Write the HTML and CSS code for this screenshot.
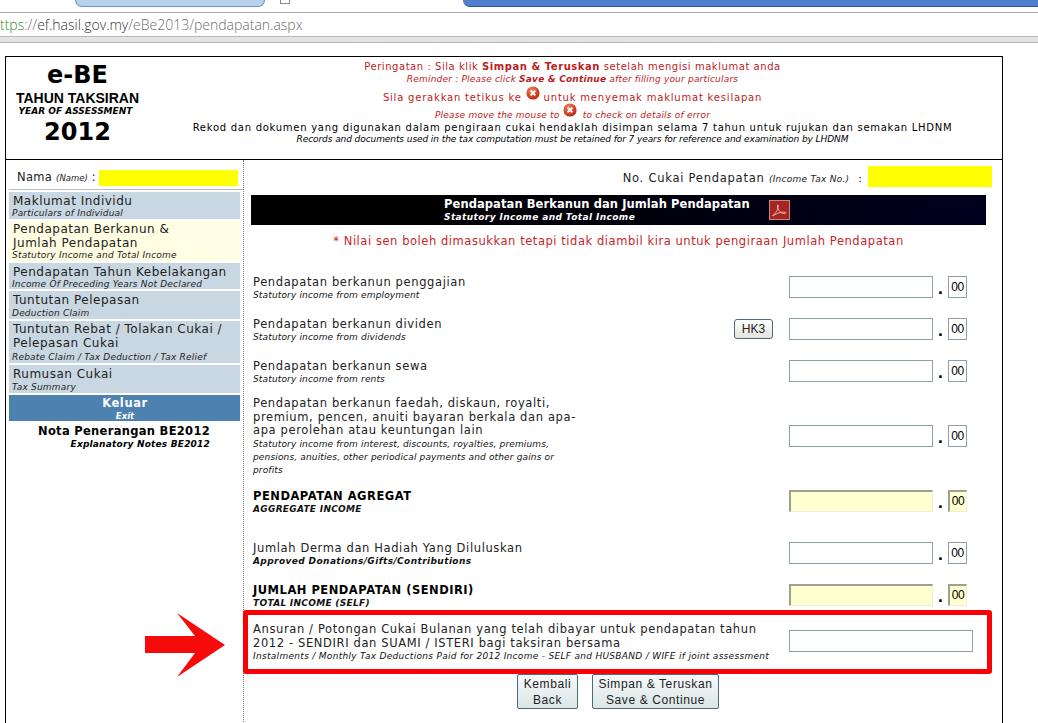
FILE: index.html
```html
<!DOCTYPE html>
<html lang="ms">
<head>
<meta charset="utf-8">
<title>e-BE 2012 - Pendapatan</title>
<link rel="stylesheet" href="styles.css">
</head>
<body>
<div class="tabstrip">
  <div class="tab-light"></div>
  <div class="tab-icon"></div>
  <div class="tab-blue"></div>
</div>
<div class="urlbar"><span class="scheme">ttps</span>://<span class="host">ef.hasil.gov.my</span>/eBe2013/pendapatan.aspx</div>
<div class="toolband"></div>

<div class="sheet">
  <header class="head">
    <div class="brand">
      <div class="brand-title">e-BE</div>
      <div class="brand-year-ms">TAHUN TAKSIRAN</div>
      <div class="brand-year-en">YEAR OF ASSESSMENT</div>
      <div class="brand-num">2012</div>
    </div>
    <div class="notes">
      <p class="n-red n1">Peringatan : Sila klik <b>Simpan &amp; Teruskan</b> setelah mengisi maklumat anda</p>
      <p class="n-red-i n2">Reminder : Please click <b>Save &amp; Continue</b> after filling your particulars</p>
      <p class="n-red n3">Sila gerakkan tetikus ke <svg class="err" viewBox="0 0 16 16"><use href="#x"/></svg> untuk menyemak maklumat kesilapan</p>
      <p class="n-red-i n4">Please move the mouse to <svg class="err" viewBox="0 0 16 16"><use href="#x"/></svg> &nbsp;to check on details of error</p>
      <p class="n-blk n5">Rekod dan dokumen yang digunakan dalam pengiraan cukai hendaklah disimpan selama 7 tahun untuk rujukan dan semakan LHDNM</p>
      <p class="n-blk-i n6">Records and documents used in the tax computation must be retained for 7 years for reference and examination by LHDNM</p>
    </div>
  </header>

  <div class="body">
    <aside class="side">
      <div class="namebar">
        <span class="nm">Nama <i>(Name)</i> :</span><span class="yellow-name"></span>
      </div>
      <nav class="menu">
        <a class="mi h27"><span class="ms">Maklumat Individu</span><span class="en">Particulars of Individual</span></a>
        <a class="mi mi-on h40"><span class="ms">Pendapatan Berkanun &amp;<br>Jumlah Pendapatan</span><span class="en">Statutory Income and Total Income</span></a>
        <a class="mi h26"><span class="ms">Pendapatan Tahun Kebelakangan</span><span class="en">Income Of Preceding Years Not Declared</span></a>
        <a class="mi h28"><span class="ms">Tuntutan Pelepasan</span><span class="en">Deduction Claim</span></a>
        <a class="mi h42"><span class="ms">Tuntutan Rebat / Tolakan Cukai /<br>Pelepasan Cukai</span><span class="en">Rebate Claim / Tax Deduction / Tax Relief</span></a>
        <a class="mi h28"><span class="ms">Rumusan Cukai</span><span class="en">Tax Summary</span></a>
        <a class="mi-exit"><b>Keluar</b><i>Exit</i></a>
      </nav>
      <div class="nota">
        <b>Nota Penerangan BE2012</b>
        <i>Explanatory Notes BE2012</i>
      </div>
    </aside>

    <main class="main">
      <div class="taxno">
        <span class="tn">No. Cukai Pendapatan <i>(Income Tax No.)</i></span><span class="tc">:</span><span class="yellow-tax"></span>
      </div>
      <div class="banner">
        <div class="banner-text"><b>Pendapatan Berkanun dan Jumlah Pendapatan</b><i>Statutory Income and Total Income</i></div>
        <svg class="pdf" viewBox="0 0 21 20">
          <rect x="0.5" y="0.5" width="20" height="19" fill="#a92420" stroke="#c9877e"/>
          <path d="M3.500 15.500c3-1.500 5-5 5.800-9.500.2-1.400-.8-1.600-1-.3-.2 2 2.500 6.500 4.200 7.300 1.700.8 4.500 1 4.500-.2 0-1-4.500-.8-7.500.2-2.500.8-5 2.800-5.500 3z" fill="none" stroke="#eecfc8" stroke-width="0.800"/>
        </svg>
      </div>
      <p class="sen">* Nilai sen boleh dimasukkan tetapi tidak diambil kira untuk pengiraan Jumlah Pendapatan</p>

      <div class="rows">
        <div class="row r42">
          <div class="lab"><span class="ms">Pendapatan berkanun penggajian</span><span class="en">Statutory income from employment</span></div>
          <div class="amt"><input class="rm" type="text"><span class="dot">.</span><span class="cents">00</span></div>
        </div>
        <div class="row r42">
          <div class="lab"><span class="ms">Pendapatan berkanun dividen</span><span class="en">Statutory income from dividends</span></div>
          <button class="hk3" type="button">HK3</button>
          <div class="amt"><input class="rm" type="text"><span class="dot">.</span><span class="cents">00</span></div>
        </div>
        <div class="row r42">
          <div class="lab"><span class="ms">Pendapatan berkanun sewa</span><span class="en">Statutory income from rents</span></div>
          <div class="amt"><input class="rm" type="text"><span class="dot">.</span><span class="cents">00</span></div>
        </div>
        <div class="row r88">
          <div class="lab lab-narrow"><span class="ms">Pendapatan berkanun faedah, diskaun, royalti, premium, pencen, anuiti bayaran berkala dan apa-apa perolehan atau keuntungan lain</span><span class="en">Statutory income from interest, discounts, royalties, premiums, pensions, anuities, other periodical payments and other gains or profits</span></div>
          <div class="amt"><input class="rm" type="text"><span class="dot">.</span><span class="cents">00</span></div>
        </div>
        <div class="row r42 gap-after">
          <div class="lab"><span class="ms strong">PENDAPATAN AGREGAT</span><span class="en strong">AGGREGATE INCOME</span></div>
          <div class="amt"><input class="rm calc" type="text"><span class="dot">.</span><span class="cents calc-c">00</span></div>
        </div>
        <div class="row r42">
          <div class="lab"><span class="ms">Jumlah Derma dan Hadiah Yang Diluluskan</span><span class="en strong-sm">Approved Donations/Gifts/Contributions</span></div>
          <div class="amt"><input class="rm" type="text"><span class="dot">.</span><span class="cents">00</span></div>
        </div>
        <div class="row r42">
          <div class="lab"><span class="ms strong">JUMLAH PENDAPATAN (SENDIRI)</span><span class="en strong">TOTAL INCOME (SELF)</span></div>
          <div class="amt"><input class="rm calc" type="text"><span class="dot">.</span><span class="cents calc-c">00</span></div>
        </div>
        <div class="row rlast">
          <div class="redbox"></div>
          <svg class="arrow" viewBox="0 0 80 64"><path d="M0 23H50L32 0L80 32L32 64L50 40H0z" fill="#f60a0a"/></svg>
          <div class="lab lab-wide"><span class="ms">Ansuran / Potongan Cukai Bulanan yang telah dibayar untuk pendapatan tahun 2012 - SENDIRI dan SUAMI / ISTERI bagi taksiran bersama</span><span class="en">Instalments / Monthly Tax Deductions Paid for 2012 Income - SELF and HUSBAND / WIFE if joint assessment</span></div>
          <input class="rm-wide" type="text">
        </div>
      </div>

      <div class="actions">
        <button class="btn" type="button">Kembali<br>Back</button>
        <button class="btn" type="button">Simpan &amp; Teruskan<br>Save &amp; Continue</button>
      </div>
    </main>
  </div>
</div>

<svg class="defs" width="0" height="0">
  <defs>
    <radialGradient id="xg" cx="40%" cy="30%" r="75%"><stop offset="0" stop-color="#f08a60"/><stop offset="1" stop-color="#b81f08"/></radialGradient>
    <g id="x"><circle cx="8" cy="8" r="7.500" fill="url(#xg)"/><path d="M5.300 5.300l5.400 5.400M10.700 5.300l-5.400 5.400" stroke="#fff" stroke-width="2.200"/></g>
  </defs>
</svg>
</body>
</html>
```
FILE: styles.css
```css
* { box-sizing: border-box; }
html, body { margin: 0; padding: 0; height: 723px; overflow: hidden; background: #fff; }
body { font-family: "DejaVu Sans", Verdana, sans-serif; color: #000; }
p { margin: 0; }

.tabstrip { display: flex; height: 13px; border-bottom: 1px solid #a9a9ad; background: #fff; align-items: flex-start; }
.tab-light { margin-left: 75px; width: 190px; height: 7px; background: #b9d0ec; border: 1px solid #6e93c4; border-top: 0; border-radius: 0 0 9px 9px; }
.tab-icon { margin-left: 15px; width: 10px; height: 4px; border: 1px solid #888; border-top: 0; }
.tab-blue { margin-left: 173px; flex: 1; height: 7px; background: #4f7fcd; border-bottom: 1px solid #2f5590; border-radius: 0 0 0 9px; }

.urlbar { height: 24px; font: 300 14px/24px "Open Sans", sans-serif; color: #6d6d6d; overflow: hidden; white-space: nowrap; border-bottom: 1px solid #b8b8b8; }
.urlbar .scheme { color: #2f8a2f; }
.urlbar .host { color: #333; }
.toolband { height: 6px; background: #e4e4e4; border-bottom: 1px solid #b5b5b5; }

.sheet { margin: 13px 0 0 5px; width: 998px; height: 700px; border: 1px solid #000; }
.head { display: flex; height: 103px; border-bottom: 1px solid #000; }
.brand { width: 143px; text-align: center; padding-top: 4px; }
.brand-title { font-size: 24px; font-weight: bold; line-height: 28px; }
.brand-year-ms { font: bold 14px/17px "Liberation Sans", sans-serif; margin-top: 1px; white-space: nowrap; }
.brand-year-en { font-size: 9px; font-weight: bold; font-style: italic; line-height: 11px; margin-top: -1px; margin-right: 4px; white-space: nowrap; }
.brand-num { font-size: 24px; font-weight: bold; line-height: 30px; margin-top: 0; }

.notes { flex: 1; text-align: center; padding: 3px 6px 0 0; }
.notes p { white-space: nowrap; }
.n-red { color: #bb1c22; font-size: 10px; letter-spacing: 0.55px; }
.n-red-i { color: #bb1c22; font-size: 9px; font-style: italic; letter-spacing: 0.2px; }
.n-blk { font-size: 10px; letter-spacing: 0.73px; line-height: 13px; }
.n-blk-i { font-size: 9px; font-style: italic; line-height: 12px; letter-spacing: -0.08px; }
.n1 { line-height: 14px; }
.n2 { line-height: 12px; margin-top: -1px; }
.n3 { line-height: 17px; margin-top: 1px; letter-spacing: 0.8px; }
.n4 { line-height: 16px; margin-top: -3px; }
.n5 { margin-top: -2px; }
.n6 { margin-top: -1px; }
.err { width: 14px; height: 14px; vertical-align: 1px; }
.defs { position: absolute; }

.body { display: flex; height: 596px; }
.side { width: 237px; flex: none; padding-left: 3px; }
.namebar { height: 30px; border-bottom: 1px solid #b9bcbc; display: flex; align-items: flex-end; padding-bottom: 3px; }
.nm { font-size: 11.500px; letter-spacing: 0.3px; color: #222; margin-left: 8px; line-height: 16px; white-space: nowrap; }
.nm i { font-size: 8.500px; letter-spacing: 0; }
.yellow-name { width: 139px; height: 16px; background: #ffff00; margin-left: 3px; }

.menu { display: flex; flex-direction: column; gap: 2px; margin-top: 2px; }
.mi { display: flex; flex-direction: column; justify-content: space-between; width: 231px; background: #c9d7e2; padding: 2px 0 0 4px; color: #222; }
.mi.h40, .mi.h42 { padding-top: 1px; }
.mi-on { background: #fffde2; }
.h26 { height: 26px; } .h27 { height: 27px; } .h28 { height: 28px; } .h40 { height: 40px; } .h42 { height: 42px; }
.mi .ms { font-size: 12px; line-height: 14px; letter-spacing: 0.5px; white-space: nowrap; }
.mi .en { font-size: 9px; font-style: italic; line-height: 11px; letter-spacing: 0.2px; white-space: nowrap; margin-left: -1px; }
.mi-exit { display: flex; flex-direction: column; align-items: center; width: 231px; height: 26px; padding: 1px 0 0 1px; background: #4d82b0; color: #fff; }
.mi-exit b { font-size: 11.500px; line-height: 15px; letter-spacing: 0.6px; }
.mi-exit i { font-size: 8.500px; line-height: 10px; font-weight: bold; }

.nota { width: 231px; display: flex; flex-direction: column; margin-top: 3px; text-align: right; padding-right: 30px; }
.nota b { font-size: 11.500px; line-height: 14px; letter-spacing: 0.3px; white-space: nowrap; }
.nota i { font-size: 9px; font-weight: bold; line-height: 12px; letter-spacing: 0.2px; white-space: nowrap; }

.main { flex: 1; border-left: 1px dotted #777; padding-left: 7px; }
.taxno { height: 34px; display: flex; justify-content: flex-end; align-items: flex-end; padding-right: 10px; padding-bottom: 7px; }
.tn { font-size: 11.500px; letter-spacing: 0.75px; color: #222; white-space: nowrap; line-height: 16px; }
.tn i { font-size: 9px; letter-spacing: 0.25px; }
.tc { font-size: 11px; margin: 0 6px 0 9px; line-height: 16px; }
.yellow-tax { width: 124px; height: 21px; background: #ffff00; }

.banner { width: 735px; height: 30px; margin-top: 1px; display: flex; align-items: center; color: #fff; background: linear-gradient(90deg, #000 0, #000 20%, #00001e 100%); padding-left: 193px; }
.banner-text { display: flex; flex-direction: column; width: 325px; }
.banner-text b { font-size: 11.500px; line-height: 15px; letter-spacing: 0.08px; white-space: nowrap; }
.banner-text i { font-size: 9px; font-weight: bold; line-height: 11px; letter-spacing: 0.4px; white-space: nowrap; }
.pdf { width: 21px; height: 20px; flex: none; }
.sen { width: 735px; text-align: center; color: #c8242a; font-size: 11.500px; letter-spacing: 0.55px; line-height: 15px; margin-top: 9px; white-space: nowrap; }

.rows { margin-top: 17px; }
.row { display: flex; align-items: center; position: relative; padding-left: 2px; }
.r42 { height: 42px; }
.r88 { height: 88px; }
.gap-after { margin-bottom: 10px; }
.rlast { height: 50px; }
.lab { display: flex; flex-direction: column; flex: 1; min-width: 0; padding-top: 4px; }
.lab .ms { font-size: 11.500px; line-height: 13px; letter-spacing: 0.62px; color: #222; }
.lab .en { font-size: 9px; font-style: italic; line-height: 13px; letter-spacing: 0.15px; color: #111; }
.lab .ms.strong { font-weight: bold; color: #000; letter-spacing: 0.5px; }
.lab .en.strong { font-weight: bold; letter-spacing: 0.3px; }
.lab .en.strong-sm { font-weight: bold; letter-spacing: 0.4px; }
.lab-narrow { flex: none; width: 328px; margin-right: auto; padding-top: 2px; }
.lab-narrow .ms { line-height: 13.500px; }
.lab-wide { flex: none; width: 520px; margin-right: auto; padding-top: 2px; }
.lab-wide .ms { line-height: 14px; }
.lab-wide .en { letter-spacing: 0.3px; white-space: nowrap; }
.amt { display: flex; align-items: center; width: 178px; margin-right: 35px; flex: none; }
.rm { width: 144px; height: 22px; border: 1px solid #8d9fa8; background: #fff; padding: 0; border-radius: 0; outline: 0; }
.rm.calc { background: #ffffcf; border: 1px solid #eeeedc; border-top: 2px solid #a0a090; border-left: 2px solid #a0a090; }
.dot { width: 15px; text-align: center; font-size: 14px; font-weight: bold; line-height: 22px; padding-top: 3px; }
.cents { width: 19px; height: 22px; border: 1px solid #8d9fa8; font: 12px/20px "Liberation Sans", sans-serif; text-align: center; letter-spacing: -0.3px; }
.calc-c { background: #ffffcf; border: 1px solid #eeeedc; border-top: 2px solid #a0a090; border-left: 2px solid #a0a090; line-height: 19px; }
.hk3 { flex: none; width: 39px; height: 20px; margin-right: 16px; padding: 0; border: 1px solid #4a6a80; border-radius: 3px; background: linear-gradient(#fff, #e3e3dc); font: 12px/16px "Liberation Sans", sans-serif; color: #222; }
.rm-wide { width: 184px; height: 22px; border: 1px solid #8d9fa8; background: #fff; padding: 0; margin-right: 29px; flex: none; }

.redbox { position: absolute; left: -8px; top: -6px; width: 749px; height: 64px; border: 5px solid #fb0007; border-radius: 3px; }
.arrow { position: absolute; left: -106px; top: -3px; width: 80px; height: 64px; }

.actions { display: flex; gap: 14px; margin: 8px 0 0 266px; }
.btn { padding: 0; height: 35px; border: 1px solid #4a6a80; border-radius: 2px; background: linear-gradient(#f7f9f9, #dbe6e6); font: 12px/16px "Liberation Sans", sans-serif; letter-spacing: 0.6px; color: #222; width: 61px; white-space: nowrap; }
.btn + .btn { width: 127px; }
```
